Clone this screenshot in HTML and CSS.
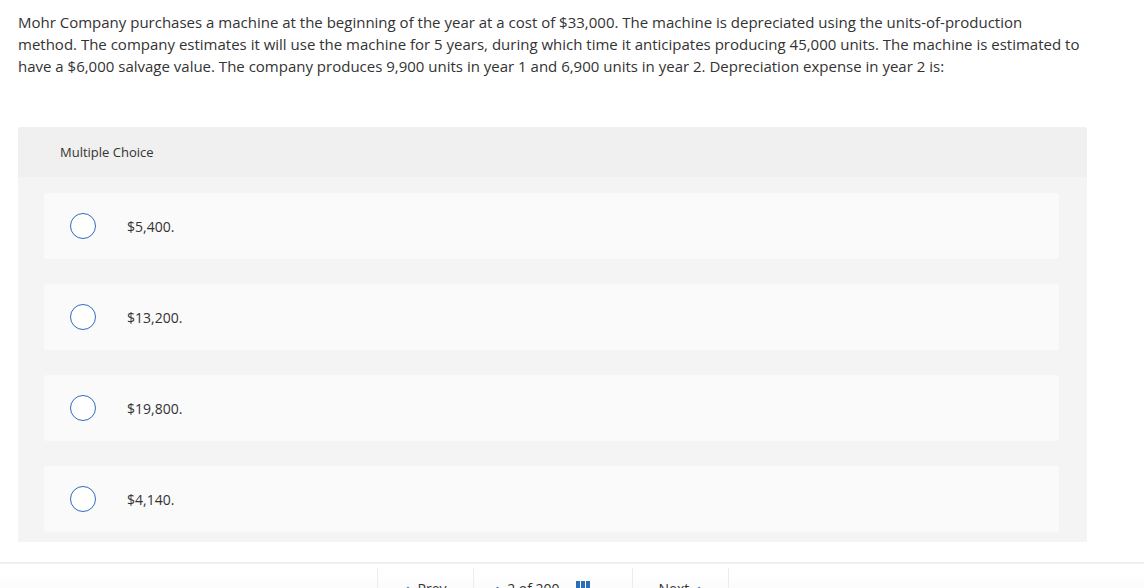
FILE: index.html
```html
<!DOCTYPE html>
<html>
<head>
<meta charset="utf-8">
<link rel="stylesheet" href="styles.css">
</head>
<body>
<div class="page">
  <p class="question">Mohr Company purchases a machine at the beginning of the year at a cost of $33,000. The machine is depreciated using the units-of-production method. The company estimates it will use the machine for 5 years, during which time it anticipates producing 45,000 units. The machine is estimated to have a $6,000 salvage value. The company produces 9,900 units in year 1 and 6,900 units in year 2. Depreciation expense in year 2 is:</p>

  <div class="card">
    <div class="card-head">Multiple Choice</div>
    <div class="card-body">
      <div class="option"><span class="radio"></span><span class="label">$5,400.</span></div>
      <div class="option"><span class="radio"></span><span class="label">$13,200.</span></div>
      <div class="option"><span class="radio"></span><span class="label">$19,800.</span></div>
      <div class="option"><span class="radio"></span><span class="label">$4,140.</span></div>
    </div>
  </div>

  <div class="footer">
    <div class="nav">
      <div class="nav-btn prev"><span class="chev">&#8249;</span><span>Prev</span></div>
      <div class="nav-mid"><span class="chev">&#8249;</span><span>2 of 200</span>
        <svg class="grid" width="14" height="12" viewBox="0 0 14 12"><rect x="0" y="0" width="4" height="12" fill="#2a6ebb"/><rect x="5" y="0" width="4" height="12" fill="#2a6ebb"/><rect x="10" y="0" width="4" height="12" fill="#2a6ebb"/></svg>
      </div>
      <div class="nav-btn next"><span>Next</span><span class="chev">&#8250;</span></div>
    </div>
  </div>
</div>
</body>
</html>
```

FILE: styles.css
```css
html, body {
  margin: 0;
  padding: 0;
  background: #ffffff;
}
body {
  font-family: "Open Sans", "Liberation Sans", sans-serif;
  color: #333333;
  width: 1144px;
  height: 588px;
  overflow: hidden;
}
.page {
  display: flex;
  flex-direction: column;
}
.question {
  margin: 0;
  padding: 11px 0 0 18px;
  width: 1067px;
  font-size: 15px;
  line-height: 22px;
  color: #333333;
}
.card {
  margin: 50px 0 0 18px;
  width: 1069px;
  background: #f4f4f4;
  border-radius: 3px 3px 0 0;
}
.card-head {
  height: 50px;
  display: flex;
  align-items: center;
  padding-left: 42px;
  background: #f0f0f0;
  font-size: 13px;
  color: #333;
  border-radius: 3px 3px 0 0;
}
.card-body {
  padding: 16px 28px 10px 26px;
  display: flex;
  flex-direction: column;
  gap: 25px;
}
.option {
  height: 66px;
  background: #fafafa;
  border-radius: 3px;
  display: flex;
  align-items: center;
  padding-left: 26px;
}
.radio {
  width: 24px;
  height: 24px;
  border: 1px solid #2a6ebb;
  border-radius: 50%;
  background: #ffffff;
  flex: none;
}
.label {
  margin-left: 31px;
  font-size: 14px;
  color: #333;
}
.footer {
  margin-top: 20px;
  border-top: 2px solid #efefef;
  height: 30px;
  background: linear-gradient(to bottom, #ffffff 0px, #ffffff 12px, #fcfcfc 20px);
}
.nav {
  display: flex;
  margin-left: 377px;
  margin-top: 4px;
  height: 30px;
}
.nav-btn, .nav-mid {
  display: flex;
  align-items: flex-start;
  padding-top: 11px;
  font-size: 14px;
  color: #333;
  gap: 8px;
}
.nav-btn {
  width: 95px;
  justify-content: center;
  border-left: 1px solid #ececec;
  border-right: 1px solid #ececec;
}
.nav-mid {
  width: 158px;
  padding-left: 20px;
  box-sizing: border-box;
}
.chev {
  color: #2a6ebb;
  font-weight: bold;
}
.grid {
  margin-left: 8px;
  margin-top: 2px;
}
```
